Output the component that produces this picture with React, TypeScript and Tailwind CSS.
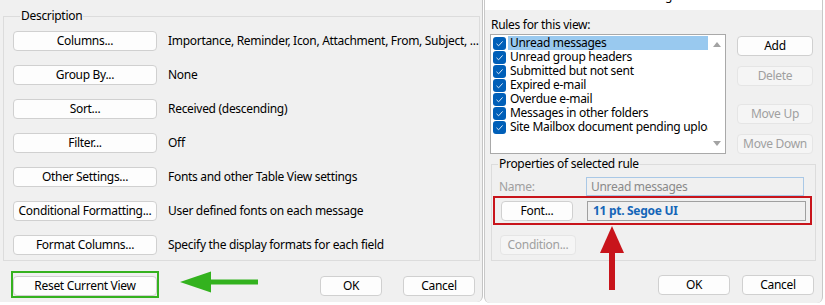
import React from 'react'

const font = { fontFamily: '"Noto Sans", "Open Sans", sans-serif', letterSpacing: '-0.3px' }

const btn = "h-[20px] flex items-center justify-center rounded-[4px] border border-[#d0d0d0] bg-[#fdfdfd] text-[12px] text-black whitespace-nowrap"
const btnOff = "h-[20px] flex items-center justify-center rounded-[4px] border border-[#e5e5e5] bg-[#f5f5f5] text-[12px] text-[#a0a0a0] whitespace-nowrap"

const rows = [
  { label: 'Columns...', text: 'Importance, Reminder, Icon, Attachment, From, Subject, ...' },
  { label: 'Group By...', text: 'None' },
  { label: 'Sort...', text: 'Received (descending)' },
  { label: 'Filter...', text: 'Off' },
  { label: 'Other Settings...', text: 'Fonts and other Table View settings' },
  { label: 'Conditional Formatting...', text: 'User defined fonts on each message' },
  { label: 'Format Columns...', text: 'Specify the display formats for each field' },
]

const rules = [
  'Unread messages',
  'Unread group headers',
  'Submitted but not sent',
  'Expired e-mail',
  'Overdue e-mail',
  'Messages in other folders',
  'Site Mailbox document pending upload',
]

function Check() {
  return (
    <svg width="13" height="13" viewBox="0 0 13 13" className="shrink-0">
      <rect x="0" y="0" width="13" height="13" rx="3" fill="#005fb8" />
      <path d="M3.5 6.8 L5.6 8.8 L9.6 4.4" fill="none" stroke="#dbe9f7" strokeWidth="1" />
    </svg>
  )
}

function LeftDialog() {
  return (
    <div className="w-[483px] h-[302px] shrink-0 bg-[#f0f0f0] border-r border-[#c4c4c4] rounded-br-[6px] flex flex-col">
      <fieldset className="ml-[3px] mt-[8px] w-[474px] border border-[#dcdcdc] pl-[9px] pb-[5px]">
        <legend className="ml-[7px] px-[1px] text-[12px] leading-[16px] text-black">Description</legend>
        <div className="flex flex-col gap-[14px] pt-[7px]">
          {rows.map(r => (
            <div key={r.label} className="flex items-center gap-[11px]">
              <div className={`${btn} w-[144px]`}>{r.label}</div>
              <span className="text-[12px] text-black whitespace-nowrap">{r.text}</span>
            </div>
          ))}
        </div>
      </fieldset>
      <div className="flex items-start mt-[10px]">
        <div className="ml-[11px] w-[148px] h-[27px] border-2 border-[#35b21f] pt-[3px]">
          <div className={`${btn} w-[144px]`}>Reset Current View</div>
        </div>
        <div className="ml-[161px] mt-[5px] flex gap-[21px]">
          <div className={`${btn} w-[62px]`}>OK</div>
          <div className={`${btn} w-[72px]`}>Cancel</div>
        </div>
      </div>
    </div>
  )
}

function RightDialog() {
  return (
    <div className="w-[339px] h-[303px] shrink-0 ml-[1px] bg-[#f0f0f0] border-l border-r border-[#c8c8c8] rounded-b-[6px] flex flex-col">
      <div className="h-[10px] bg-white overflow-hidden pl-[63px]">
        <div className="-mt-[10px] text-[12px] leading-[12px] text-black whitespace-nowrap">Conditional Formatting</div>
      </div>
      <div className="pl-[6px] pt-[7px] text-[12px] leading-[16px] text-black">Rules for this view:</div>
      <div className="flex pl-[5px] mt-[1px]">
        <div className="w-[236px] h-[120px] shrink-0 bg-white border border-[#a9a9a9] flex">
          <div className="flex-1 min-w-0 overflow-hidden flex flex-col pt-[1px] pl-[2px]">
            {rules.map((r, i) => (
              <div key={r} className="h-[14px] flex items-center gap-[2px]">
                <Check />
                <span className={`flex-1 min-w-0 h-[14px] pl-[2px] text-[12px] leading-[14px] text-black whitespace-nowrap overflow-hidden ${i === 0 ? 'bg-[#99c9ef]' : ''}`}>{r}</span>
              </div>
            ))}
          </div>
          <div className="w-[17px] shrink-0 flex flex-col items-center justify-between py-[7px]">
            <svg width="8" height="5" viewBox="0 0 8 5"><path d="M0 5 L4 0 L8 5 Z" fill="#a3a3a3" /></svg>
            <svg width="8" height="5" viewBox="0 0 8 5"><path d="M0 0 L4 5 L8 0 Z" fill="#a3a3a3" /></svg>
          </div>
        </div>
        <div className="ml-[11px] pt-[2px] flex flex-col">
          <div className={`${btn} w-[76px]`}>Add</div>
          <div className={`${btnOff} w-[76px] mt-[10px]`}>Delete</div>
          <div className={`${btnOff} w-[76px] mt-[18px]`}>Move Up</div>
          <div className={`${btnOff} w-[76px] mt-[10px]`}>Move Down</div>
        </div>
      </div>
      <fieldset className="ml-[6px] mt-[2px] w-[325px] border border-[#dcdcdc] pb-[5px]">
        <legend className="ml-[6px] px-[1px] text-[12px] leading-[16px] text-black">Properties of selected rule</legend>
        <div className="flex items-center pt-[5px]">
          <span className="w-[94px] pl-[7px] text-[12px] text-[#a0a0a0]">Name:</span>
          <div className="w-[218px] h-[19px] border border-[#a9c8e6] bg-[#f0f0f0] px-[4px] text-[12px] leading-[17px] text-[#8a8a8a]">Unread messages</div>
        </div>
        <div className="ml-[1px] w-[319px] h-[29px] border-2 border-[#c8141b] flex items-center pl-[6px]">
          <div className={`${btn} w-[72px]`}>Font...</div>
          <div className="ml-[14px] w-[219px] h-[20px] border border-[#a0a0a0] bg-[#f0f0f0] px-[5px] text-[12px] leading-[18px] font-bold text-[#1566b8]">11 pt. Segoe UI</div>
        </div>
        <div className={`${btnOff} w-[76px] ml-[8px] mt-[10px]`}>Condition...</div>
      </fieldset>
      <div className="flex justify-end gap-[12px] pr-[8px] mt-[14px]">
        <div className={`${btn} w-[72px]`}>OK</div>
        <div className={`${btn} w-[72px]`}>Cancel</div>
      </div>
    </div>
  )
}

export default function App() {
  return (
    <div className="relative w-[825px] h-[305px] bg-white overflow-hidden flex" style={font}>
      <LeftDialog />
      <RightDialog />
      {/* annotations */}
      <svg className="absolute left-[178px] top-[270px]" width="82" height="24" viewBox="0 0 82 24">
        <path d="M2 12 L33 1.5 L33 22.5 Z" fill="#33b21e" />
        <rect x="32" y="9.5" width="48" height="5" fill="#33b21e" />
      </svg>
      <svg className="absolute left-[598px] top-[225px]" width="28" height="66" viewBox="0 0 28 66">
        <path d="M14 1 L26 28 L2 28 Z" fill="#c8141b" />
        <rect x="11" y="26" width="6" height="39" fill="#c8141b" />
      </svg>
    </div>
  )
}
